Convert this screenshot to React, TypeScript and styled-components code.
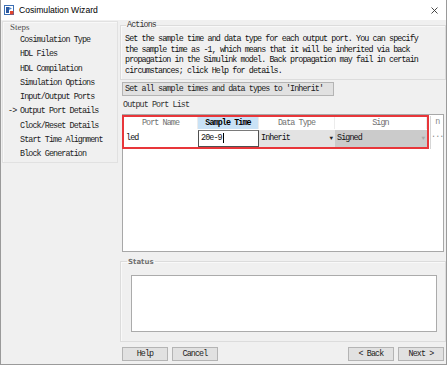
import * as React from 'react';
import styled, { createGlobalStyle } from 'styled-components';

const GlobalStyle = createGlobalStyle`
  html, body {
    margin: 0;
    padding: 0;
    background: #ffffff;
  }
  * {
    box-sizing: border-box;
  }
`;

const mono = `"Liberation Mono", "DejaVu Sans Mono", monospace`;

/**
 * Outer dialog window.
 */
const Window = styled.div`
  width: 447px;
  height: 365px;
  display: flex;
  flex-direction: column;
  border: 1px solid #9a9a9a;
  border-top: none;
  background: #f0f0f0;
  font-family: ${mono};
  font-size: 8.4px;
  letter-spacing: -0.9px;
  color: #111;
`;

const TitleBar = styled.div`
  height: 20px;
  flex: none;
  display: flex;
  align-items: center;
  padding: 0 8px 0 3px;
  background: #ffffff;
`;

const TitleText = styled.span`
  margin-left: 5px;
  font-family: "Liberation Sans", Arial, sans-serif;
  font-size: 8.6px;
  letter-spacing: 0;
  color: #000;
  flex: 1;
`;

const Body = styled.div`
  flex: 1;
  display: flex;
`;

const LeftColumn = styled.div`
  width: 119px;
  flex: none;
  padding: 1px 0 0 1px;
`;

const StepsPanel = styled.div`
  width: 116px;
  height: 142px;
  border: 1px solid #e1e1e1;
  box-shadow: inset 1px 1px 0 #f8f8f8;
  padding: 0 0 0 2px;
`;

const StepsTitle = styled.div`
  font-family: "Liberation Serif", serif;
  font-size: 9px;
  letter-spacing: 0;
  line-height: 10px;
  color: #505050;
  padding: 0 0 0 5px;
`;

const StepList = styled.div`
  padding-top: 1px;
`;

const StepRow = styled.div`
  display: flex;
  height: 14.3px;
  line-height: 14.3px;
  white-space: nowrap;
  color: #222;
`;

const StepMarker = styled.span`
  width: 15px;
  flex: none;
  padding-left: 3px;
`;

const RightColumn = styled.div`
  width: 326px;
  flex: none;
  display: flex;
  flex-direction: column;
`;

const GroupBox = styled.fieldset<{ $pad: string; $top?: number }>`
  margin: ${p => p.$top ?? 0}px 0 0 0;
  border: 1px solid #dcdcdc;
  box-shadow: inset 1px 1px 0 #f9f9f9;
  padding: ${p => p.$pad};
  min-width: 0;
`;

const Legend = styled.legend<{ $sans?: boolean; $indent: number }>`
  padding: 0 1px;
  margin-left: ${p => p.$indent}px;
  line-height: 10px;
  font-family: ${p => (p.$sans ? '"DejaVu Sans", Verdana, sans-serif' : mono)};
  font-size: ${p => (p.$sans ? '7px' : '8.4px')};
  font-weight: ${p => (p.$sans ? 600 : 400)};
  letter-spacing: ${p => (p.$sans ? '0' : '-0.9px')};
  color: ${p => (p.$sans ? '#707070' : '#333')};
`;

const Description = styled.div`
  line-height: 10.7px;
  white-space: pre;
`;

const Button = styled.button<{ $width?: number }>`
  height: 14px;
  width: ${p => (p.$width ? `${p.$width}px` : '46px')};
  padding: 0 2px;
  border: 1px solid #b4b4b4;
  background: #e1e1e1;
  font-family: ${mono};
  font-size: 8.4px;
  letter-spacing: -0.9px;
  color: #222;
  text-align: ${p => (p.$width ? 'left' : 'center')};
  line-height: 12px;
  white-space: nowrap;
`;

const InheritRow = styled.div`
  margin: 2px 0 0 2px;
`;

const ListLabel = styled.div`
  margin: 4px 0 0 3px;
  line-height: 10px;
  color: #333;
`;

const PortTable = styled.div`
  margin: 4px 2px 0 2px;
  height: 138px;
  background: #ffffff;
  border: 1px solid #a8a8a8;
  display: flex;
  align-items: flex-start;
`;

const Highlight = styled.div`
  margin: 0 0 0 -1px;
  border: 2px solid #e8363a;
  display: grid;
  grid-template-columns: 74px 61px 76px 92px;
  grid-template-rows: 12px 17px;
  row-gap: 1px;
`;

const HeadCell = styled.div<{ $active?: boolean }>`
  text-align: center;
  line-height: 12px;
  background: ${p => (p.$active ? '#c9e2f6' : '#ffffff')};
  color: ${p => (p.$active ? '#000' : '#707070')};
  font-weight: ${p => (p.$active ? 700 : 400)};
  border-right: 1px solid #ececec;
  white-space: nowrap;
`;

const Cell = styled.div<{ $bg?: string }>`
  display: flex;
  align-items: center;
  justify-content: space-between;
  padding: 0 2px;
  background: ${p => p.$bg ?? '#ffffff'};
  white-space: nowrap;
`;

const EditCell = styled(Cell)`
  border: 1px solid #505050;
  border-top-color: #7a7a7a;
  justify-content: flex-start;
`;

const Caret = styled.span`
  display: inline-block;
  width: 1px;
  height: 10px;
  margin-left: 1px;
  background: #000;
`;

const Arrow = styled.span<{ $faint?: boolean }>`
  font-size: 6px;
  letter-spacing: 0;
  color: ${p => (p.$faint ? '#a8a8a8' : '#222')};
`;

const ExtraColumn = styled.div`
  margin: 1px 0 0 1px;
  width: 12px;
  height: 33px;
  border-left: 1px solid #d6d6d6;
  display: grid;
  grid-template-rows: 13px 18px;
  color: #8a8a8a;
  text-align: center;
`;

const ExtraCell = styled.div`
  line-height: 13px;
`;

const StatusBox = styled.div`
  height: 57px;
  background: #ffffff;
  border: 1px solid #ababab;
`;

const ButtonRow = styled.div`
  margin: 5px 2px 0 2px;
  display: flex;
  gap: 4px;
`;

const Spacer = styled.div`
  flex: 1;
`;

const steps = [
  'Cosimulation Type',
  'HDL Files',
  'HDL Compilation',
  'Simulation Options',
  'Input/Output Ports',
  'Output Port Details',
  'Clock/Reset Details',
  'Start Time Alignment',
  'Block Generation',
];

const description = [
  'Set the sample time and data type for each output port. You can specify',
  'the sample time as -1, which means that it will be inherited via back',
  'propagation in the Simulink model. Back propagation may fail in certain',
  'circumstances; click Help for details.',
].join('\n');

const WizardIcon = () => (
  <svg width="10" height="10" viewBox="0 0 10 10">
    <rect x="0.5" y="0.5" width="9" height="9" fill="#ffffff" stroke="#3c6fb4" />
    <rect x="2" y="2" width="3" height="6" fill="#2b5aa0" />
    <path d="M5 2 L8 3.5 L5 5 Z" fill="#4f86cc" />
    <rect x="6" y="6" width="3.5" height="3.5" fill="#e2452e" />
  </svg>
);

const CloseIcon = () => (
  <svg width="7" height="7" viewBox="0 0 7 7">
    <path d="M0.5 0.5 L6.5 6.5 M6.5 0.5 L0.5 6.5" stroke="#333" strokeWidth="0.9" />
  </svg>
);

export default function App(): JSX.Element {
  return (
    <>
      <GlobalStyle />
      <Window>
        <TitleBar>
          <WizardIcon />
          <TitleText>Cosimulation Wizard</TitleText>
          <CloseIcon />
        </TitleBar>
        <Body>
          <LeftColumn>
            <StepsPanel>
              <StepsTitle>Steps</StepsTitle>
              <StepList>
                {steps.map(s => (
                  <StepRow key={s}>
                    <StepMarker>{s === 'Output Port Details' ? '->' : ''}</StepMarker>
                    {s}
                  </StepRow>
                ))}
              </StepList>
            </StepsPanel>
          </LeftColumn>
          <RightColumn>
            <GroupBox $pad="4px 4px 2px 4px">
              <Legend $indent={1}>Actions</Legend>
              <Description>{description}</Description>
            </GroupBox>
            <InheritRow>
              <Button $width={212}>Set all sample times and data types to 'Inherit'</Button>
            </InheritRow>
            <ListLabel>Output Port List</ListLabel>
            <PortTable>
              <Highlight>
                <HeadCell>Port Name</HeadCell>
                <HeadCell $active>Sample Time</HeadCell>
                <HeadCell>Data Type</HeadCell>
                <HeadCell>Sign</HeadCell>
                <Cell>led</Cell>
                <EditCell>
                  20e-9
                  <Caret />
                </EditCell>
                <Cell $bg="#e3e3e3">
                  Inherit
                  <Arrow>▼</Arrow>
                </Cell>
                <Cell $bg="#cbcbcb">
                  Signed
                  <Arrow $faint>▼</Arrow>
                </Cell>
              </Highlight>
              <ExtraColumn>
                <ExtraCell>n</ExtraCell>
                <ExtraCell>...</ExtraCell>
              </ExtraColumn>
            </PortTable>
            <GroupBox $pad="8px 8px 9px 10px" $top={5}>
              <Legend $sans $indent={-4}>Status</Legend>
              <StatusBox />
            </GroupBox>
            <ButtonRow>
              <Button>Help</Button>
              <Button>Cancel</Button>
              <Spacer />
              <Button>&lt; Back</Button>
              <Button>Next &gt;</Button>
            </ButtonRow>
          </RightColumn>
        </Body>
      </Window>
    </>
  );
}
